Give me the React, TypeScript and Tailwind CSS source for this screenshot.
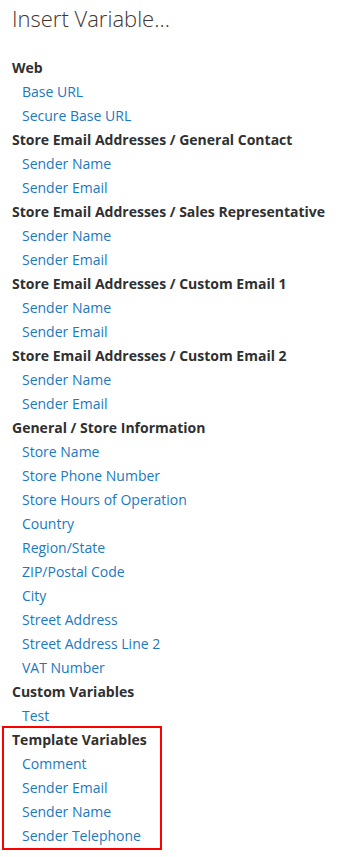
import React from "react";

type Section = { title: string; items: string[] };

const sections: Section[] = [
  { title: "Web", items: ["Base URL", "Secure Base URL"] },
  { title: "Store Email Addresses / General Contact", items: ["Sender Name", "Sender Email"] },
  { title: "Store Email Addresses / Sales Representative", items: ["Sender Name", "Sender Email"] },
  { title: "Store Email Addresses / Custom Email 1", items: ["Sender Name", "Sender Email"] },
  { title: "Store Email Addresses / Custom Email 2", items: ["Sender Name", "Sender Email"] },
  {
    title: "General / Store Information",
    items: [
      "Store Name",
      "Store Phone Number",
      "Store Hours of Operation",
      "Country",
      "Region/State",
      "ZIP/Postal Code",
      "City",
      "Street Address",
      "Street Address Line 2",
      "VAT Number",
    ],
  },
  { title: "Custom Variables", items: ["Test"] },
];

const template: Section = {
  title: "Template Variables",
  items: ["Comment", "Sender Email", "Sender Name", "Sender Telephone"],
};

function Block({ s }: { s: Section }) {
  return (
    <div>
      <div className="font-bold text-[#303030] text-[14px] leading-[24px]">{s.title}</div>
      {s.items.map((it, i) => (
        <div key={i} className="pl-[10px] text-[14px] leading-[24px] text-[#1979c3]">
          {it}
        </div>
      ))}
    </div>
  );
}

export default function App() {
  return (
    <div
      className="bg-white min-h-[857px] px-[12px] pt-[5px]"
      style={{ fontFamily: '"Open Sans", "Liberation Sans", sans-serif' }}
    >
      <div className="text-[22px] leading-[27px] font-light text-[#41362f]">Insert Variable...</div>
      <div className="mt-[24px]">
        {sections.map((s, i) => (
          <Block key={i} s={s} />
        ))}
        <div className="-mt-[2px] -ml-[10px] w-[160px] border-2 border-[#f00] pl-[8px]">
          <Block s={template} />
        </div>
      </div>
    </div>
  );
}
